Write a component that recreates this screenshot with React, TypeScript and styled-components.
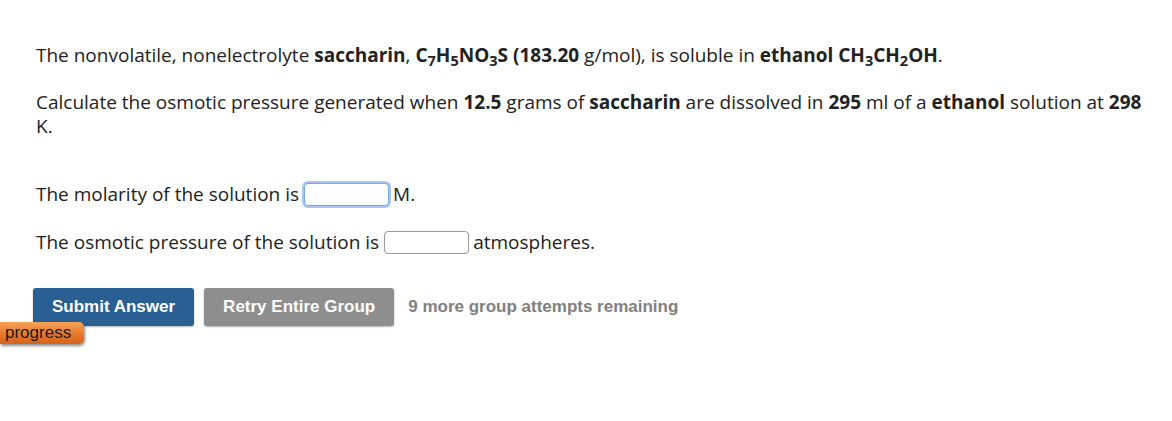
import React from "react";
import styled, { createGlobalStyle } from "styled-components";

const Global = createGlobalStyle`
  html, body { margin: 0; padding: 0; background: #fff; }
  body { font-family: "Open Sans", sans-serif; color: #222; }
`;

const Page = styled.div`
  width: 1172px;
  height: 421px;
  box-sizing: border-box;
  padding: 43px 24px 0 36px;
`;

const Para = styled.p<{ $mt?: number }>`
  margin: ${(p) => p.$mt ?? 0}px 0 0 0;
  font-size: 19px;
  line-height: 24px;
  color: #222;
`;

const Sub = styled.sub`
  font-size: 14.5px;
  vertical-align: -4px;
  line-height: 0;
`;

const Line = styled.div<{ $mt: number }>`
  display: flex;
  align-items: center;
  height: 24px;
  margin-top: ${(p) => p.$mt}px;
  font-size: 19px;
  line-height: 24px;
  color: #222;
`;

const Input = styled.input<{ $focus?: boolean; $w: number }>`
  box-sizing: border-box;
  width: ${(p) => p.$w}px;
  height: 23px;
  margin: 0 4px 0 5px;
  border: 1px solid ${(p) => (p.$focus ? "#7aa7e8" : "#999")};
  border-radius: 4px;
  box-shadow: ${(p) => (p.$focus ? "0 0 0 2px #a8c6f0" : "none")};
  background: #fff;
  outline: none;
`;

const Actions = styled.div`
  display: flex;
  align-items: center;
  gap: 10px;
  margin-top: 34px;
  margin-left: -3px;
`;

const Button = styled.button<{ $variant: "primary" | "gray" }>`
  height: 38px;
  padding: 0 19px;
  border: none;
  border-radius: 3px;
  font-family: "Liberation Sans", Arial, sans-serif;
  font-weight: bold;
  font-size: 17px;
  color: #fff;
  background: ${(p) => (p.$variant === "primary" ? "#2a5f94" : "#8e8e8e")};
  box-shadow: 0 1px 2px rgba(0, 0, 0, 0.3);
`;

const Remaining = styled.span`
  margin-left: 4px;
  font-family: "Liberation Sans", Arial, sans-serif;
  font-weight: bold;
  font-size: 17px;
  color: #808080;
`;

const Progress = styled.div`
  position: absolute;
  left: 0;
  top: 322px;
  width: 84px;
  height: 22px;
  box-sizing: border-box;
  padding-left: 5px;
  border-radius: 0 5px 5px 0;
  background: linear-gradient(#f7a35a, #e8782a 55%, #d4621a);
  box-shadow: 1px 2px 3px rgba(0, 0, 0, 0.45);
  font-family: "Liberation Sans", Arial, sans-serif;
  font-size: 17px;
  line-height: 22px;
  color: #1a1a1a;
`;

export default function App() {
  return (
    <>
      <Global />
      <Page>
        <Para>
          The nonvolatile, nonelectrolyte <b>saccharin</b>,{" "}
          <b>
            C<Sub>7</Sub>H<Sub>5</Sub>NO<Sub>3</Sub>S (183.20
          </b>{" "}
          g/mol), is soluble in <b>ethanol</b>{" "}
          <b>
            CH<Sub>3</Sub>CH<Sub>2</Sub>OH
          </b>
          .
        </Para>
        <Para $mt={23}>
          Calculate the osmotic pressure generated when <b>12.5</b> grams of{" "}
          <b>saccharin</b> are dissolved in <b>295</b> ml of a <b>ethanol</b>{" "}
          solution at <b>298</b> K.
        </Para>
        <Line $mt={44}>
          The molarity of the solution is
          <Input $focus $w={85} />
          M.
        </Line>
        <Line $mt={24}>
          The osmotic pressure of the solution is
          <Input $w={85} />
          atmospheres.
        </Line>
        <Actions>
          <Button $variant="primary">Submit Answer</Button>
          <Button $variant="gray">Retry Entire Group</Button>
          <Remaining>9 more group attempts remaining</Remaining>
        </Actions>
      </Page>
      <Progress>progress</Progress>
    </>
  );
}
